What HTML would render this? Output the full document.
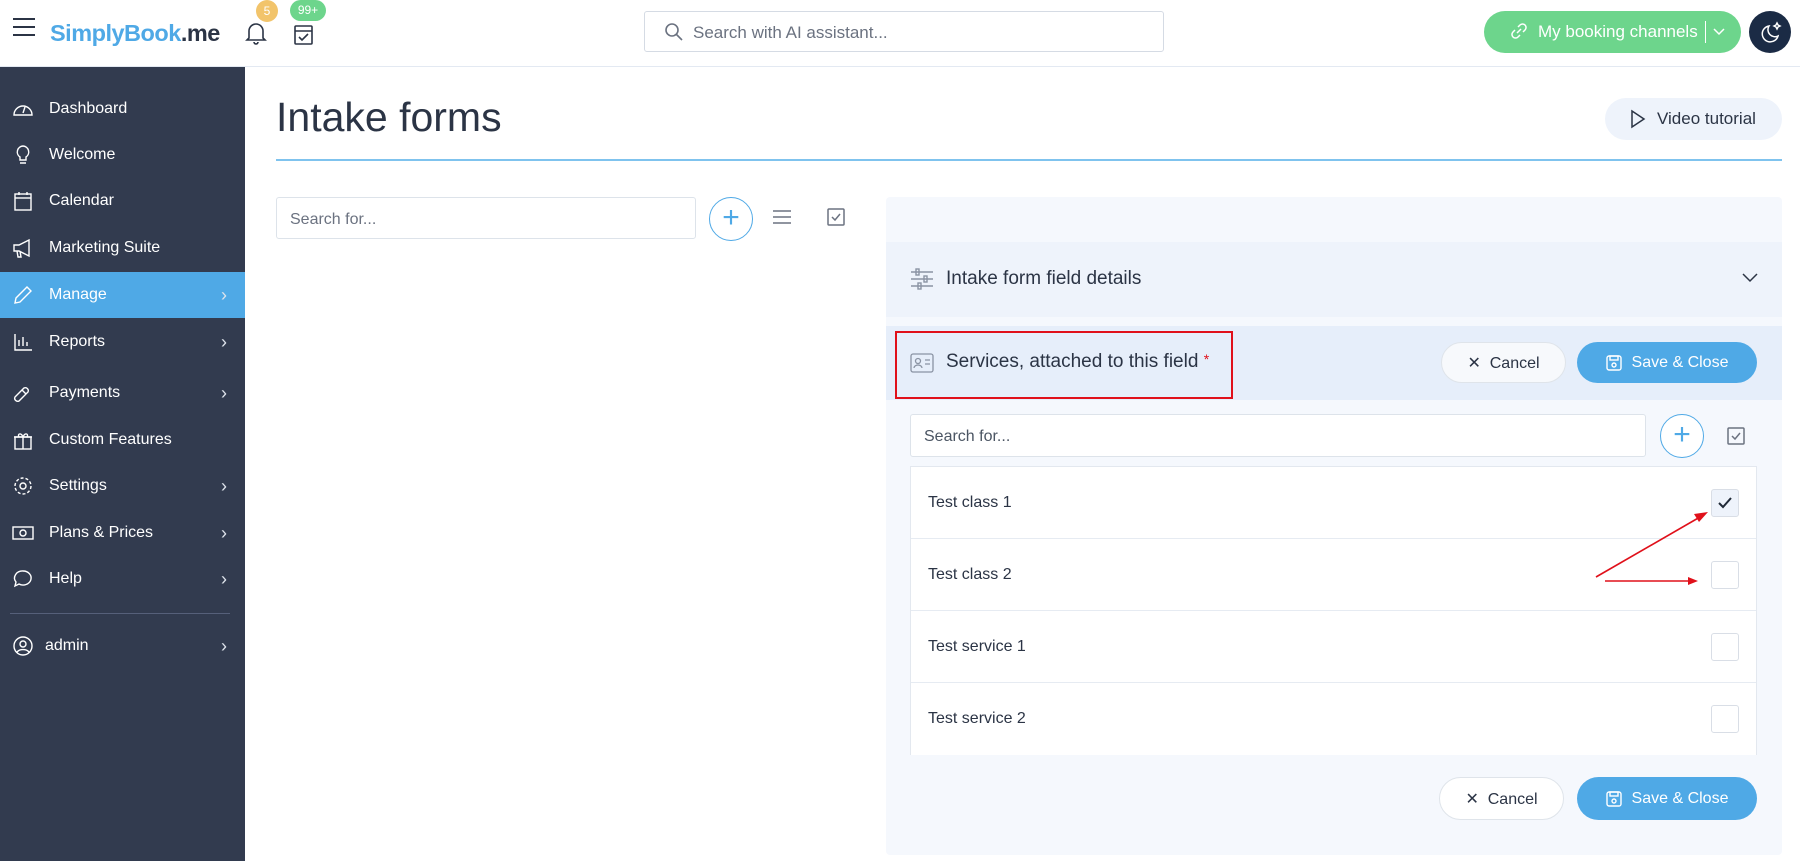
<!DOCTYPE html>
<html><head><meta charset="utf-8"><style>
*{box-sizing:border-box;margin:0;padding:0}
body{width:1800px;height:861px;overflow:hidden;background:#fff;font-family:"Liberation Sans",sans-serif;color:#2b3445;position:relative}
.abs{position:absolute}
.hdr{left:0;top:0;width:1800px;height:67px;border-bottom:1px solid #e3e9f2;background:#fff}
.side{left:0;top:67px;width:245px;height:794px;background:#323b4f}
.item{position:absolute;left:0;width:245px;height:46px;color:#fff;font-size:16px;display:flex;align-items:center;padding-left:49px}
.item svg{position:absolute;left:12px}
.item .ch{position:absolute;right:18px;font-size:18px;color:#dfe4ec}
.btnc{border:1px solid #dfe4ea;border-radius:22px;background:#f7f9fc;display:flex;align-items:center;justify-content:center;font-size:16px;color:#2b3445}
.btns{border-radius:22px;background:#4fa9e6;display:flex;align-items:center;justify-content:center;font-size:16px;color:#fff}
.row{position:absolute;left:0;width:845px;height:72px;border-bottom:1px solid #e6ebf2;display:flex;align-items:center;padding-left:17px;font-size:16px;background:#fff}
.cb{position:absolute;right:17px;top:22px;width:28px;height:28px;border:1px solid #d9dee6;border-radius:3px;background:#fff}
</style></head><body>
<div class="abs hdr">
 <svg class="abs" style="left:12px;top:17px" width="24" height="20"><g stroke="#2b3445" stroke-width="2"><line x1="1" y1="2" x2="23" y2="2"/><line x1="1" y1="10" x2="23" y2="10"/><line x1="1" y1="18" x2="23" y2="18"/></g></svg>
 <div class="abs" style="left:50px;top:20px;font-size:23.5px;font-weight:bold;letter-spacing:-0.5px"><span style="color:#4fa9e6">SimplyBook</span><span style="color:#2b3445">.me</span></div>
 <svg class="abs" style="left:245px;top:20px" width="22" height="26" fill="none" stroke="#2b3445" stroke-width="1.6"><path d="M4 18V11a7 7 0 0 1 14 0v7l2 2H2z"/><path d="M9 22a2 2 0 0 0 4 0"/></svg>
 <div class="abs" style="left:256px;top:0;width:22px;height:22px;border-radius:11px;background:#f2c46b;color:#fff;font-size:12px;text-align:center;line-height:22px">5</div>
 <svg class="abs" style="left:292px;top:22px" width="24" height="24" fill="none" stroke="#2b3445" stroke-width="1.6"><rect x="3" y="4" width="17" height="18" rx="1"/><line x1="3" y1="9" x2="20" y2="9"/><path d="M7 15l3 3 6-6"/></svg>
 <div class="abs" style="left:290px;top:0;width:36px;height:21px;border-radius:11px;background:#6dd58c;color:#fff;font-size:12px;text-align:center;line-height:21px">99+</div>
 <div class="abs" style="left:644px;top:11px;width:520px;height:41px;border:1px solid #d5dbe4;border-radius:3px;font-size:17px;color:#6b7280;padding:11px 0 0 48px">Search with AI assistant...</div>
 <svg class="abs" style="left:664px;top:22px" width="20" height="20" fill="none" stroke="#6b7280" stroke-width="1.6"><circle cx="8" cy="8" r="6"/><line x1="12.5" y1="12.5" x2="18" y2="18"/></svg>
 <div class="abs" style="left:1484px;top:11px;width:257px;height:42px;border-radius:21px;background:#6dd58c;color:#fff;font-size:17px;line-height:42px;padding-left:54px">My booking channels</div>
 <svg class="abs" style="left:1510px;top:22px" width="18" height="18" fill="none" stroke="#fff" stroke-width="1.5"><path d="M7 11l4-4M8 5l2-2a3 3 0 0 1 5 5l-2 2M10 13l-2 2a3 3 0 0 1-5-5l2-2"/></svg>
 <div class="abs" style="left:1705px;top:21px;width:1px;height:22px;background:#fff"></div>
 <svg class="abs" style="left:1713px;top:27px" width="12" height="10" fill="none" stroke="#fff" stroke-width="1.5"><path d="M1 2l5 5 5-5"/></svg>
 <div class="abs" style="left:1749px;top:11px;width:42px;height:42px;border-radius:21px;background:#1b2b45"></div>
 <svg class="abs" style="left:1758px;top:20px" width="26" height="24" fill="none" stroke="#fff" stroke-width="1.5"><path d="M11 6a8 8 0 1 0 9 10a7 7 0 0 1-9-10z"/><path d="M19 3l1 2 2 1-2 1-1 2-1-2-2-1 2-1z"/></svg>
</div>
<div class="abs side">
 <div class="item" style="top:19px"><svg width="22" height="20" fill="none" stroke="#fff" stroke-width="1.4"><path d="M2 16a9 9 0 1 1 18 0z"/><line x1="11" y1="14" x2="13" y2="8"/></svg>Dashboard</div>
 <div class="item" style="top:65px"><svg width="22" height="22" fill="none" stroke="#fff" stroke-width="1.4"><path d="M11 2a6 6 0 0 0-3 11v3h6v-3a6 6 0 0 0-3-11zM8 19h6"/></svg>Welcome</div>
 <div class="item" style="top:111px"><svg width="22" height="22" fill="none" stroke="#fff" stroke-width="1.4"><rect x="3" y="4" width="16" height="16"/><line x1="3" y1="8" x2="19" y2="8"/><line x1="7" y1="2" x2="7" y2="5"/><line x1="15" y1="2" x2="15" y2="5"/></svg>Calendar</div>
 <div class="item" style="top:158px"><svg width="22" height="22" fill="none" stroke="#fff" stroke-width="1.4"><path d="M2 8h5l10-5v16L7 14H2zM5 14l1 6h3l-1-6"/></svg>Marketing Suite</div>
 <div class="item" style="top:205px;background:#4fa9e6"><svg width="22" height="22" fill="none" stroke="#fff" stroke-width="1.4"><path d="M3 19l1-5L15 3l4 4L8 18z"/></svg>Manage<span class="ch">›</span></div>
 <div class="item" style="top:252px"><svg width="22" height="22" fill="none" stroke="#fff" stroke-width="1.4"><path d="M3 3v16h17M7 15V9M11 15V6M15 15v-4"/></svg>Reports<span class="ch">›</span></div>
 <div class="item" style="top:303px"><svg width="22" height="22" fill="none" stroke="#fff" stroke-width="1.4"><path d="M3 15l9-9a3 3 0 0 1 4 4l-9 9a3 3 0 0 1-4-4zM10 8l4 4"/></svg>Payments<span class="ch">›</span></div>
 <div class="item" style="top:350px"><svg width="22" height="22" fill="none" stroke="#fff" stroke-width="1.4"><rect x="3" y="8" width="16" height="12"/><path d="M2 8h18M11 8v12M11 8c-2-5-6-3-4 0M11 8c2-5 6-3 4 0"/></svg>Custom Features</div>
 <div class="item" style="top:396px"><svg width="22" height="22" fill="none" stroke="#fff" stroke-width="1.4"><circle cx="11" cy="11" r="3"/><circle cx="11" cy="11" r="8" stroke-dasharray="3 2"/></svg>Settings<span class="ch">›</span></div>
 <div class="item" style="top:443px"><svg width="22" height="22" fill="none" stroke="#fff" stroke-width="1.4"><rect x="1" y="5" width="20" height="12"/><circle cx="11" cy="11" r="3"/></svg>Plans &amp; Prices<span class="ch">›</span></div>
 <div class="item" style="top:489px"><svg width="22" height="22" fill="none" stroke="#fff" stroke-width="1.4"><path d="M11 3a8 7 0 1 1-4 13l-4 2 1-4a8 7 0 0 1 7-11z"/></svg>Help<span class="ch">›</span></div>
 <div class="abs" style="left:10px;top:546px;width:220px;height:1px;background:#56607a"></div>
 <div class="item" style="top:556px;padding-left:45px"><svg width="22" height="22" fill="none" stroke="#fff" stroke-width="1.4"><circle cx="11" cy="11" r="9"/><circle cx="11" cy="9" r="3"/><path d="M5 17a7 5 0 0 1 12 0"/></svg>admin<span class="ch">›</span></div>
</div>
<div class="abs" style="left:276px;top:94px;font-size:41px;color:#2b3445">Intake forms</div>
<div class="abs" style="left:276px;top:159px;width:1506px;height:2px;background:#7fc3ee"></div>
<div class="abs" style="left:1605px;top:98px;width:177px;height:42px;border-radius:21px;background:#eef3fb;font-size:17px;line-height:42px;padding-left:52px">Video tutorial</div>
<svg class="abs" style="left:1630px;top:109px" width="16" height="20" fill="none" stroke="#2b3445" stroke-width="1.5"><path d="M2 2l12 8-12 8z"/></svg>
<div class="abs" style="left:276px;top:197px;width:420px;height:42px;border:1px solid #dde3ea;border-radius:3px;font-size:16px;color:#6b7280;padding:13px 0 0 13px">Search for...</div>
<div class="abs" style="left:709px;top:197px;width:44px;height:44px;border:1.5px solid #4fa9e6;border-radius:22px;color:#4fa9e6;font-size:30px;text-align:center;line-height:40px">+</div>
<svg class="abs" style="left:772px;top:209px" width="20" height="16" stroke="#6b7280" stroke-width="1.6"><line x1="1" y1="2" x2="19" y2="2"/><line x1="1" y1="8" x2="19" y2="8"/><line x1="1" y1="14" x2="19" y2="14"/></svg>
<svg class="abs" style="left:827px;top:208px" width="18" height="18" fill="none" stroke="#6b7280" stroke-width="1.5"><rect x="1" y="1" width="16" height="16" rx="1"/><path d="M5 9l3 3 5-6"/></svg>
<div class="abs" style="left:886px;top:197px;width:896px;height:658px;background:#f5f8fd;border-radius:4px"></div>
<div class="abs" style="left:886px;top:242px;width:896px;height:75px;background:#eef3fb"></div>
<svg class="abs" style="left:910px;top:268px" width="24" height="22" fill="none" stroke="#8a93a3" stroke-width="1.4"><path d="M1 4h22M1 11h22M1 18h22"/><rect x="6" y="1" width="3" height="6"/><rect x="14" y="8" width="3" height="6"/><rect x="8" y="15" width="3" height="6"/></svg>
<div class="abs" style="left:946px;top:268px;font-size:19px">Intake form field details</div>
<svg class="abs" style="left:1742px;top:273px" width="16" height="10" fill="none" stroke="#2b3445" stroke-width="1.5"><path d="M1 1l7 7 7-7"/></svg>
<div class="abs" style="left:886px;top:326px;width:896px;height:74px;background:#e6eefa"></div>
<div class="abs" style="left:895px;top:331px;width:338px;height:68px;border:2px solid #e0101a"></div>
<svg class="abs" style="left:910px;top:353px" width="24" height="20" fill="none" stroke="#8a93a3" stroke-width="1.3"><rect x="1" y="1" width="22" height="18" rx="2"/><circle cx="8" cy="8" r="2.5"/><path d="M4 15a4 3 0 0 1 8 0M15 7h5M15 11h5"/></svg>
<div class="abs" style="left:946px;top:351px;font-size:19px">Services, attached to this field <span style="color:#e0101a;font-size:14px;vertical-align:top">*</span></div>
<div class="abs btnc" style="left:1441px;top:342px;width:125px;height:41px">✕&nbsp; Cancel</div>
<div class="abs btns" style="left:1577px;top:342px;width:180px;height:41px"><svg width="16" height="16" fill="none" stroke="#fff" stroke-width="1.4" style="margin-right:10px"><rect x="1" y="1" width="14" height="14" rx="2"/><rect x="4" y="1" width="8" height="4"/><circle cx="8" cy="10" r="2"/></svg>Save &amp; Close</div>
<div class="abs" style="left:910px;top:414px;width:736px;height:43px;border:1px solid #dde3ea;border-radius:3px;background:#fff;font-size:16px;color:#4b5563;padding:13px 0 0 13px">Search for...</div>
<div class="abs" style="left:1660px;top:414px;width:44px;height:44px;border:1.5px solid #4fa9e6;border-radius:22px;color:#4fa9e6;font-size:30px;text-align:center;line-height:40px;background:#fff">+</div>
<svg class="abs" style="left:1727px;top:427px" width="18" height="18" fill="none" stroke="#6b7280" stroke-width="1.5"><rect x="1" y="1" width="16" height="16" rx="1"/><path d="M5 9l3 3 5-6"/></svg>
<div class="abs" style="left:910px;top:466px;width:847px;height:289px;border:1px solid #e3e8ef;background:#fff">
 <div class="row" style="top:0">Test class 1<div class="cb" style="background:#eef3fb"><svg width="26" height="26" fill="none" stroke="#1f2937" stroke-width="2"><path d="M7 13l4 4 8-9"/></svg></div></div>
 <div class="row" style="top:72px">Test class 2<div class="cb"></div></div>
 <div class="row" style="top:144px">Test service 1<div class="cb"></div></div>
 <div class="row" style="top:216px;border-bottom:none">Test service 2<div class="cb"></div></div>
</div>
<svg class="abs" style="left:0;top:0" width="1800" height="861" fill="none"><g stroke="#e0101a" stroke-width="1.6"><line x1="1596" y1="577" x2="1700" y2="517"/><line x1="1605" y1="581" x2="1690" y2="581"/></g><path d="M1708 512l-14 2 5 8z" fill="#e0101a"/><path d="M1698 581l-10-4v8z" fill="#e0101a"/></svg>
<div class="abs btnc" style="left:1439px;top:777px;width:125px;height:43px;background:#fff">✕&nbsp; Cancel</div>
<div class="abs btns" style="left:1577px;top:777px;width:180px;height:43px"><svg width="16" height="16" fill="none" stroke="#fff" stroke-width="1.4" style="margin-right:10px"><rect x="1" y="1" width="14" height="14" rx="2"/><rect x="4" y="1" width="8" height="4"/><circle cx="8" cy="10" r="2"/></svg>Save &amp; Close</div>
</body></html>
